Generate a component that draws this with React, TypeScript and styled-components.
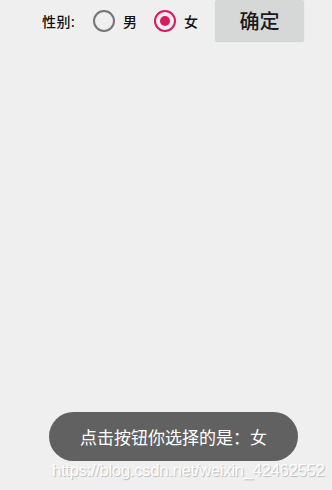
import styled, { createGlobalStyle } from "styled-components";

const GlobalStyle = createGlobalStyle`
  html, body {
    margin: 0;
    padding: 0;
    background: #efefef;
  }
  body {
    font-family: Roboto, "Noto Sans CJK SC", sans-serif;
  }
`;

const options = [
  { label: "男", checked: false },
  { label: "女", checked: true },
];

const App = () => {
  return (
    <Screen>
      <GlobalStyle />
      <Toolbar>
        <Label>性别:</Label>
        <RadioGroup>
          {options.map((opt) => (
            <RadioItem key={opt.label}>
              <RadioCircle $checked={opt.checked}>
                {opt.checked && <RadioDot />}
              </RadioCircle>
              <RadioText>{opt.label}</RadioText>
            </RadioItem>
          ))}
        </RadioGroup>
        <ConfirmButton>确定</ConfirmButton>
      </Toolbar>
      <Toast>点击按钮你选择的是：女</Toast>
      <Watermark>https://blog.csdn.net/weixin_42462552</Watermark>
    </Screen>
  );
};

export default App;

const Screen = styled.div`
  position: relative;
  width: 332px;
  height: 490px;
  overflow: hidden;
  background: #efefef;
`;

const Toolbar = styled.div`
  display: flex;
  align-items: center;
  height: 42px;
  padding-left: 42px;
`;

const Label = styled.div`
  font-size: 14px;
  font-weight: 500;
  color: #111;
  width: 51px;
  letter-spacing: 0.5px;
`;

const RadioGroup = styled.div`
  display: flex;
  align-items: center;
  gap: 17px;
`;

const RadioItem = styled.div`
  display: flex;
  align-items: center;
  gap: 8px;
`;

const RadioCircle = styled.div<{ $checked: boolean }>`
  box-sizing: border-box;
  width: 22px;
  height: 22px;
  border-radius: 50%;
  border: 2px solid ${(p) => (p.$checked ? "#d81b60" : "#757575")};
  display: flex;
  align-items: center;
  justify-content: center;
`;

const RadioDot = styled.div`
  width: 10px;
  height: 10px;
  border-radius: 50%;
  background: #d81b60;
`;

const RadioText = styled.div`
  font-size: 14px;
  font-weight: 500;
  color: #111;
`;

const ConfirmButton = styled.div`
  margin-left: 17px;
  width: 89px;
  height: 41px;
  align-self: flex-start;
  background: #d6d7d7;
  border-radius: 2px;
  box-shadow: 0 1px 1px rgba(0, 0, 0, 0.12);
  display: flex;
  align-items: center;
  justify-content: center;
  font-size: 20px;
  font-weight: 500;
  color: #1a1a1a;
`;

const Toast = styled.div`
  position: absolute;
  left: 49px;
  top: 412px;
  width: 249px;
  height: 49px;
  border-radius: 25px;
  background: #616161;
  color: #ffffff;
  font-size: 17px;
  display: flex;
  align-items: center;
  justify-content: center;
`;

const Watermark = styled.div`
  position: absolute;
  left: 52px;
  top: 461px;
  font-family: "Liberation Sans", Arial, sans-serif;
  font-size: 17px;
  letter-spacing: -0.45px;
  color: rgba(255, 255, 255, 0.95);
  text-shadow: 1px 1px 1px rgba(0, 0, 0, 0.22);
  white-space: nowrap;
`;
